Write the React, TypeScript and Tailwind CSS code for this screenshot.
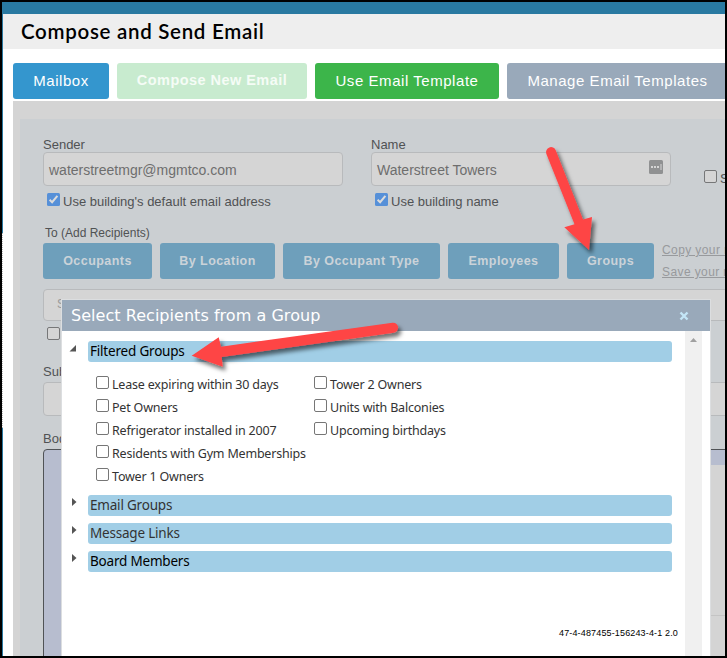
import React from "react";

const recipientButtons = [
  { label: "Occupants", box: "w-[109px]" },
  { label: "By Location", box: "w-[115px]" },
  { label: "By Occupant Type", box: "w-[157px]" },
  { label: "Employees", box: "w-[111px]" },
  { label: "Groups", box: "w-[87px]" },
];

const groupColumns = [
  [
    "Lease expiring within 30 days",
    "Pet Owners",
    "Refrigerator installed in 2007",
    "Residents with Gym Memberships",
    "Tower 1 Owners",
  ],
  ["Tower 2 Owners", "Units with Balconies", "Upcoming birthdays"],
];

function EmptyBox({ dim = false }: { dim?: boolean }) {
  return (
    <span
      className={
        dim
          ? "block size-[13px] shrink-0 rounded-[2px] border border-[#767778] bg-[#d5d5d5]"
          : "block size-[13px] shrink-0 rounded-[2px] border border-[#767676] bg-white"
      }
    />
  );
}

function CheckedBox() {
  return (
    <svg className="block size-[13px] shrink-0" viewBox="0 0 13 13">
      <rect width="13" height="13" rx="1.5" fill="#5690d8" />
      <path d="M2.6 6.8 5.1 9.2 10.4 2.8" fill="none" stroke="#dcdcdc" strokeWidth="2" />
    </svg>
  );
}

function Header() {
  return (
    <>
      <div className="h-3 bg-[#2979a1]" />
      <div className="flex h-[35px] items-center bg-[#eee] pb-px pl-[19px]">
        <h1 className="font-['Lato',sans-serif] text-[20.5px] font-semibold tracking-[0.7px] text-black">
          Compose and Send Email
        </h1>
      </div>
      <nav className="flex h-[52px] gap-2 pt-[14px] pl-[11px] text-[15px] tracking-[0.55px] text-white">
        <button className="h-9 w-24 shrink-0 rounded-[3px] bg-[#3496ce]">Mailbox</button>
        <button className="h-9 w-[190px] shrink-0 rounded-[3px] bg-[#c8ebcf] text-[14.5px] font-bold tracking-[0.45px] text-[#f5fcf6]">
          Compose New Email
        </button>
        <button className="h-9 w-[184px] shrink-0 rounded-[3px] bg-[#3cb54a]">Use Email Template</button>
        <button className="h-9 w-[221px] shrink-0 rounded-[3px] bg-[#99a9ba]">Manage Email Templates</button>
      </nav>
    </>
  );
}

function Field({ label, value, note, badge }: { label: string; value: string; note: string; badge?: boolean }) {
  return (
    <div className="w-[300px] shrink-0">
      <div className="h-4 text-[13px] leading-[18px] text-[#505254]">{label}</div>
      <div className="flex h-[34px] items-center justify-between rounded-[4px] border border-[#b8babc] bg-[#d5d5d5] pr-[7px] pl-[5px] text-[14px] text-[#6e6e6e]">
        <span className="pt-0.5">{value}</span>
        {badge && (
          <svg width="14" height="14" viewBox="0 0 14 14" className="mb-1">
            <rect width="14" height="14" rx="1.5" fill="#909192" />
            <path d="M2 6h2v2H2zM5 6h2v2H5zM8 6h2v2H8zM11.5 4h1v6h-1z" fill="#d5d5d5" />
          </svg>
        )}
      </div>
      <div className="flex h-[31px] items-center gap-[3px] pl-1 text-[13px] text-[#505254]">
        <span className="-mt-1">
          <CheckedBox />
        </span>
        <span>{note}</span>
      </div>
    </div>
  );
}

function ComposeForm() {
  return (
    <div className="ml-[11px] flex-1 overflow-hidden bg-[#d4d4d4] pt-[18px] pl-[7px]">
      <div className="h-full overflow-hidden bg-[#cbcfd2] pt-[17px] pl-[23px]">
        <div className="flex gap-7">
          <Field label="Sender" value="waterstreetmgr@mgmtco.com" note="Use building's default email address" />
          <Field label="Name" value="Waterstreet Towers" note="Use building name" badge />
          <div className="flex items-start gap-[3px] pt-[34px] pl-[5px] text-[13px] leading-[18px] text-[#505254]">
            <EmptyBox dim />
            <span>Send</span>
          </div>
        </div>
        <div className="h-[26px] pt-2 pl-0.5 text-[12px] leading-4 text-[#505254]">To (Add Recipients)</div>
        <div className="flex gap-2">
          {recipientButtons.map((b) => (
            <button
              key={b.label}
              className={`${b.box} h-9 shrink-0 rounded-[3px] bg-[#6e9fbb] text-[12.5px] font-bold tracking-[0.45px] text-[#cbd3d9]`}
            >
              {b.label}
            </button>
          ))}
          <div className="-mt-1 flex w-[150px] shrink-0 flex-col text-[12px] leading-[22px] tracking-[0.4px] text-[#989a9d] underline">
            <span>Copy your recipients</span>
            <span>Save your recipients</span>
          </div>
        </div>
        <div className="mt-[6px] h-8 w-[760px] rounded-[4px] border border-[#b8babc] bg-[#d5d5d5] pl-[13px] text-[12px] leading-7 text-[#999]">
          S
        </div>
        <div className="mt-[6px] pl-1">
          <EmptyBox dim />
        </div>
        <div className="mt-[23px] h-[19px] text-[13px] leading-[18px] text-[#505254]">Subject</div>
        <div className="h-[34px] w-[760px] rounded-[4px] border border-[#b8babc] bg-[#d5d5d5]" />
        <div className="mt-[14px] h-[19px] text-[13px] leading-[18px] text-[#505254]">Body</div>
        <div className="h-[260px] w-[760px] rounded-[4px] border border-[#505356] bg-[#b7bdcf] pt-[15px] pl-[100px]">
          <div className="h-[151px] border-b border-[#c4c4c4] bg-[#d4d4d4]" />
          <div className="h-[60px] bg-[#d4d4d4]" />
        </div>
      </div>
    </div>
  );
}

function GroupRow({ label, dark, open }: { label: string; dark?: boolean; open?: boolean }) {
  return (
    <div className="flex h-[21px]">
      <svg className="w-[26px] shrink-0" height="21" viewBox="0 0 26 21">
        {open ? <path d="M14 4v6.5H7.5z" fill="#555" /> : <path d="M10 3l4.5 4-4.5 4z" fill="#555" />}
      </svg>
      <div
        className={`${dark ? "text-black" : "text-[#333]"} w-[584px] rounded-[3px] bg-[#a1cee6] pl-0.5 text-[13.5px] leading-[20px] tracking-[-0.2px]`}
      >
        {label}
      </div>
    </div>
  );
}

function GroupDialog() {
  return (
    <section className="absolute top-[299px] left-[61px] flex h-[357px] w-[650px] flex-col border border-b-0 border-[#dcdee0] bg-white font-['Noto_Sans',sans-serif]">
      <header className="flex h-[31px] shrink-0 items-center justify-between bg-[#99a9ba] pr-[21px] pl-[9px]">
        <h2 className="font-['DejaVu_Sans',sans-serif] text-[16px] tracking-[0.04px] text-white">
          Select Recipients from a Group
        </h2>
        <svg width="10" height="10" viewBox="0 0 10 10" className="mt-px">
          <path d="M1.5 1.5l7 7M8.5 1.5l-7 7" stroke="#c3e6f7" strokeWidth="2.4" />
        </svg>
      </header>
      <div className="flex flex-1">
        <div className="flex w-[623px] flex-col pt-[10px]">
          <GroupRow label="Filtered Groups" dark open />
          <div className="flex h-[133px] pt-[11px] pl-[34px] text-[12.5px] tracking-[-0.2px] text-[#333]">
            {groupColumns.map((column, i) => (
              <div key={i} className="w-[218px]">
                {column.map((label) => (
                  <div key={label} className="flex h-[23px] gap-[3px]">
                    <span className="pt-[3px]">
                      <EmptyBox />
                    </span>
                    <span className="leading-[23px] whitespace-nowrap">{label}</span>
                  </div>
                ))}
              </div>
            ))}
          </div>
          <div className="flex flex-col gap-[7px]">
            <GroupRow label="Email Groups" />
            <GroupRow label="Message Links" />
            <GroupRow label="Board Members" dark />
          </div>
          <div className="mt-[54px] pr-[7px] text-right font-['Liberation_Sans',sans-serif] text-[9px] leading-[14px] tracking-[0.15px] text-black">
            47-4-487455-156243-4-1 2.0
          </div>
        </div>
        <div className="w-[17px] bg-[#f0f0f0] pt-[7px] pl-[5px]">
          <svg width="7" height="4" viewBox="0 0 7 4">
            <path d="M0 4 3.5 0 7 4z" fill="#a0a0a0" />
          </svg>
        </div>
      </div>
    </section>
  );
}

function PointerArrows() {
  return (
    <svg className="absolute top-0 left-0" width="727" height="658" viewBox="0 0 727 658">
      <defs>
        <filter id="arrow-shadow" x="-20%" y="-20%" width="150%" height="150%">
          <feDropShadow dx="3" dy="4" stdDeviation="2.2" floodColor="#000" floodOpacity="0.55" />
        </filter>
      </defs>
      <g fill="#fe4445" filter="url(#arrow-shadow)">
        <path d="M546.3 153.7A5 5 0 0 1 555.7 150.3L583 219.5 592 217 589 250 564.3 227.3 574.5 224.3z" />
        <path d="M392.5 322.7A5 5 0 0 1 393.7 332.7L221.7 357 222.7 366.7 191.7 355.7 218.7 337.3 221 346.7z" />
      </g>
    </svg>
  );
}

export default function App() {
  return (
    <div className="relative h-[658px] w-[727px] overflow-hidden border-2 border-black bg-white font-['Liberation_Sans',Arial,sans-serif]">
      <main className="flex h-[654px] flex-col">
        <Header />
        <ComposeForm />
      </main>
      <div className="absolute top-0 left-0 flex h-full w-px flex-col">
        <div className="h-[231px] bg-[#2979a1]" />
        <div className="h-[195px] border-l border-dotted border-[#bbb]" />
        <div className="flex-1 bg-[#2979a1]" />
      </div>
      <div className="absolute -top-0.5 -left-0.5 h-[658px] w-[727px]">
        <GroupDialog />
        <PointerArrows />
      </div>
    </div>
  );
}
